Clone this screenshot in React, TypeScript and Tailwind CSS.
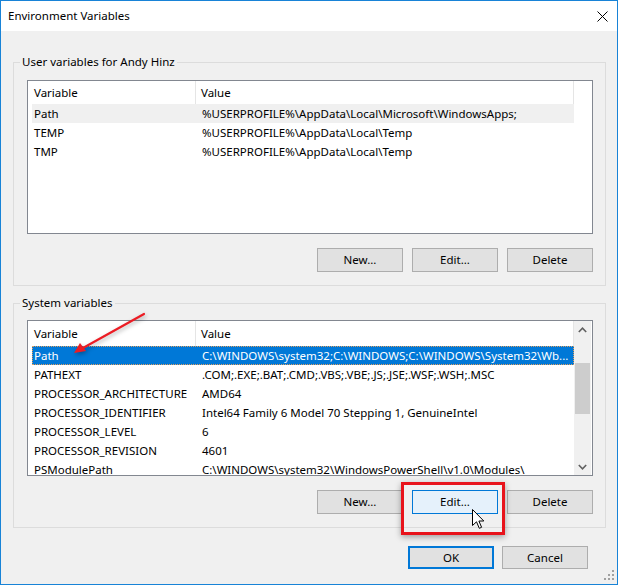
import React from 'react';

type Row = [string, string];

const userRows: Row[] = [
    ['Path', '%USERPROFILE%\\AppData\\Local\\Microsoft\\WindowsApps;'],
    ['TEMP', '%USERPROFILE%\\AppData\\Local\\Temp'],
    ['TMP', '%USERPROFILE%\\AppData\\Local\\Temp'],
];

const systemRows: Row[] = [
    ['Path', 'C:\\WINDOWS\\system32;C:\\WINDOWS;C:\\WINDOWS\\System32\\Wb...'],
    ['PATHEXT', '.COM;.EXE;.BAT;.CMD;.VBS;.VBE;.JS;.JSE;.WSF;.WSH;.MSC'],
    ['PROCESSOR_ARCHITECTURE', 'AMD64'],
    ['PROCESSOR_IDENTIFIER', 'Intel64 Family 6 Model 70 Stepping 1, GenuineIntel'],
    ['PROCESSOR_LEVEL', '6'],
    ['PROCESSOR_REVISION', '4601'],
    ['PSModulePath', 'C:\\WINDOWS\\system32\\WindowsPowerShell\\v1.0\\Modules\\'],
];

export default function App() {
    return (
        <div className="relative w-[618px] h-[585px] border border-[#1883d7] bg-[#f0f0f0] flex flex-col overflow-hidden font-['Segoe_UI','Noto_Sans','Liberation_Sans',sans-serif] text-[11.5px] text-black">
            {/* Title bar */}
            <div className="h-[30px] bg-white flex items-center justify-between pl-[7px] pr-[9px] shrink-0">
                <span className="leading-[16px] text-[11.5px]">Environment Variables</span>
                <svg width="11" height="11" viewBox="0 0 11 11" className="mt-[1px]">
                    <path d="M0.5 0.5 L10.5 10.5 M10.5 0.5 L0.5 10.5" stroke="#000" strokeWidth="1" />
                </svg>
            </div>

            {/* User variables */}
            <GroupBox label="User variables for Andy Hinz" className="mt-[23px]">
                <ListView rows={userRows} height={154} headerHeight={23} selected={0} focused={false} scrollbar={false} className="mt-[10px]" />
                <ButtonRow className="mt-[14px]" hoverEdit={false} />
            </GroupBox>

            {/* System variables */}
            <GroupBox label="System variables" className="mt-[9px]">
                <ListView rows={systemRows} height={156} headerHeight={25} selected={0} focused scrollbar className="mt-[9px]" />
                <ButtonRow className="mt-[14px]" hoverEdit />
            </GroupBox>

            {/* Dialog buttons */}
            <div className="flex justify-end gap-[8px] pr-[29px] mt-[18px]">
                <button className="w-[86px] h-[23px] bg-[#e1e1e1] border-2 border-[#0078d7] leading-[16px]">OK</button>
                <button className="w-[86px] h-[23px] bg-[#e1e1e1] border border-[#adadad] leading-[16px]">Cancel</button>
            </div>

            {/* Resize grip */}
            <svg width="12" height="12" viewBox="0 0 12 12" className="absolute right-[2px] bottom-[3px]">
                {[[9, 1], [9, 5], [5, 5], [9, 9], [5, 9], [1, 9]].map(([x, y], i) => (
                    <rect key={i} x={x} y={y} width="2" height="2" fill="#a0a0a0" />
                ))}
            </svg>

            {/* Red highlight around Edit... */}
            <div className="absolute left-[400px] top-[481px] w-[104px] h-[53px] border-[3px] border-[#e8131b] shadow-[0_2px_6px_rgba(0,0,0,0.35)]" />

            {/* Red annotation arrow */}
            <svg width="100" height="60" viewBox="0 0 100 60" className="absolute left-[60px] top-[303px] drop-shadow-[1px_2px_2px_rgba(0,0,0,0.3)]">
                <path d="M83 10 L22 44" stroke="#ec1c24" strokeWidth="2.2" strokeLinecap="round" />
                <path d="M13 49 L19 39 L25 47 Z" fill="#ec1c24" />
            </svg>

            {/* Mouse cursor */}
            <svg width="13" height="21" viewBox="0 0 13 21" className="absolute left-[471px] top-[508px]">
                <path d="M0.5 0.5 L0.5 16.5 L4.5 12.8 L7.3 19.3 L9.6 18.3 L6.9 12 L11.8 12 Z" fill="#fff" stroke="#000" strokeWidth="1" strokeLinejoin="round" />
            </svg>
        </div>
    );
}

function GroupBox({ label, className, children }: { label: string; className?: string; children: React.ReactNode }) {
    return (
        <fieldset className={`ml-[12px] w-[593px] border border-[#dcdcdc] pb-[13px] ${className ?? ''}`}>
            <legend className="ml-[6px] px-[2px] leading-[16px]">{label}</legend>
            <div className="pl-[13px]">{children}</div>
        </fieldset>
    );
}

function ListView({ rows, height, headerHeight, selected, focused, scrollbar, className }: {
    rows: Row[]; height: number; headerHeight: number; selected: number; focused: boolean; scrollbar: boolean; className?: string;
}) {
    return (
        <div className={`w-[566px] border border-[#828790] bg-white flex overflow-hidden ${className ?? ''}`} style={{ height }}>
            <div className="flex-1 flex flex-col overflow-hidden">
                <div className="flex shrink-0" style={{ height: headerHeight }}>
                    <div className="w-[168px] border-r border-[#e5e5e5] pl-[6px] flex items-center">Variable</div>
                    <div className="flex-1 border-r border-[#e5e5e5] pl-[5px] flex items-center">Value</div>
                </div>
                <div className="ml-[4px] flex flex-col">
                    {rows.map(([name, value], i) => {
                        const isSel = i === selected;
                        const rowCls = isSel
                            ? focused
                                ? 'bg-[#0078d7] text-white border-dotted border-[#e0a060]'
                                : 'bg-[#f0f0f0] border-transparent'
                            : 'border-transparent';
                        return (
                            <div key={name} className={`h-[19px] flex items-center border whitespace-nowrap ${rowCls}`}>
                                <div className="w-[163px] pl-[1px] shrink-0">{name}</div>
                                <div className="flex-1 pl-[6px] overflow-hidden">{value}</div>
                            </div>
                        );
                    })}
                </div>
            </div>
            <div className={`w-[17px] mr-[1px] shrink-0 flex flex-col items-center ${scrollbar ? 'bg-[#f0f0f0]' : 'bg-white'}`}>
                {scrollbar && (
                    <>
                        <div className="h-[17px] flex items-center justify-center">
                            <svg width="9" height="6" viewBox="0 0 9 6"><path d="M0.8 5 L4.5 1.2 L8.2 5" stroke="#606060" strokeWidth="1.6" fill="none" /></svg>
                        </div>
                        <div className="mt-[25px] w-[15px] h-[51px] bg-[#cdcdcd]" />
                        <div className="flex-1" />
                        <div className="h-[17px] flex items-center justify-center">
                            <svg width="9" height="6" viewBox="0 0 9 6"><path d="M0.8 1 L4.5 4.8 L8.2 1" stroke="#606060" strokeWidth="1.6" fill="none" /></svg>
                        </div>
                    </>
                )}
            </div>
        </div>
    );
}

function ButtonRow({ className, hoverEdit }: { className?: string; hoverEdit: boolean }) {
    const base = 'w-[86px] h-[24px] border leading-[16px]';
    return (
        <div className={`w-[566px] flex justify-end gap-[9px] ${className ?? ''}`}>
            <button className={`${base} bg-[#e1e1e1] border-[#adadad]`}>New...</button>
            <button className={`${base} ${hoverEdit ? 'bg-[#e5f1fb] border-[#0078d7]' : 'bg-[#e1e1e1] border-[#adadad]'}`}>Edit...</button>
            <button className={`${base} bg-[#e1e1e1] border-[#adadad]`}>Delete</button>
        </div>
    );
}
